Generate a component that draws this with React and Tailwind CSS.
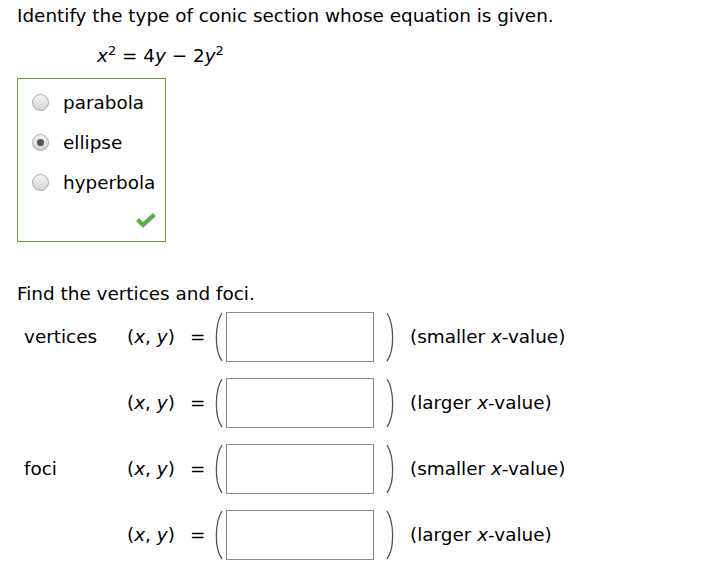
import React from "react";

const font = { fontFamily: '"DejaVu Sans", Verdana, sans-serif' };

const Radio = ({ checked }) => (
    <span className="relative inline-flex w-[17px] h-[17px] rounded-full border border-[#a9a9a9] bg-gradient-to-b from-[#f4f4f4] to-[#d4d4d4] items-center justify-center">
        {checked && <span className="w-[7px] h-[7px] rounded-full bg-[#555]"></span>}
    </span>
);

const Paren = ({ right }) => (
    <svg width="12" height="50" viewBox="0 0 12 50" className="shrink-0">
        <path
            d={right ? "M2 1 C9 12 10 38 2 49" : "M10 1 C3 12 2 38 10 49"}
            fill="none"
            stroke="#555"
            strokeWidth="1.3"
        />
    </svg>
);

const Var = ({ children }) => <i className="italic">{children}</i>;

const PointRow = ({ label, which }) => (
    <div className="flex items-center h-[50px] text-[18.4px]">
        <div className="w-[110px] pl-[7px]">{label}</div>
        <div className="w-[63px] whitespace-nowrap">(<Var>x</Var>, <Var>y</Var>)</div>
        <div className="w-[22px]">=</div>
        <Paren />
        <div className="ml-[2px] w-[148px] h-[50px] border border-[#888] bg-white"></div>
        <div className="ml-[11px]"><Paren right /></div>
        <div className="ml-[13px] whitespace-nowrap">({which} <Var>x</Var>-value)</div>
    </div>
);

export default function App() {
    return (
        <div className="w-[713px] h-[575px] bg-white text-black pl-[17px] pt-[4px]" style={font}>
            <div className="text-[18.4px] leading-[24px] whitespace-nowrap">Identify the type of conic section whose equation is given.</div>
            <div className="text-[18.4px] leading-[24px] pl-[80px] mt-[16px]">
                <Var>x</Var><sup className="text-[13px] -top-[7px]">2</sup> = 4<Var>y</Var> − 2<Var>y</Var><sup className="text-[13px] -top-[7px]">2</sup>
            </div>
            <div className="mt-[10px] w-[149px] h-[164px] border border-[#6a9a3c] pt-[15px] pl-[14px]">
                <div className="flex flex-col gap-[23px]">
                    {[["parabola", false], ["ellipse", true], ["hyperbola", false]].map(([t, c]) => (
                        <div key={t} className="flex items-center h-[17px]">
                            <Radio checked={c} />
                            <span className="ml-[14px] text-[18.4px]">{t}</span>
                        </div>
                    ))}
                </div>
                <div className="flex justify-end pr-[8px] mt-[21px]">
                    <svg width="22" height="17" viewBox="0 0 22 17">
                        <path d="M1 9 L4 6 L8 10 L18 1 L21 4 L8 16 Z" fill="#5cae4c" />
                    </svg>
                </div>
            </div>
            <div className="mt-[40px] text-[18.4px] leading-[24px]">Find the vertices and foci.</div>
            <div className="mt-[6px] flex flex-col gap-[16px]">
                <PointRow label="vertices" which="smaller" />
                <PointRow label="" which="larger" />
                <PointRow label="foci" which="smaller" />
                <PointRow label="" which="larger" />
            </div>
        </div>
    );
}
